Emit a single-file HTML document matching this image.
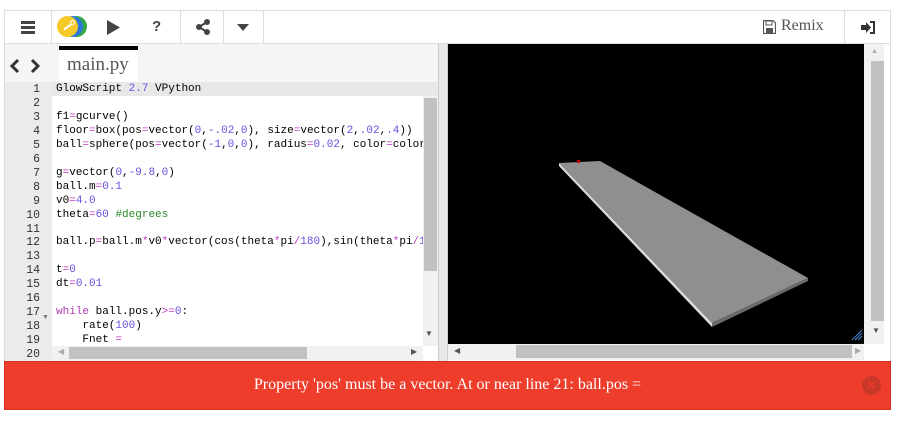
<!DOCTYPE html>
<html><head><style>
*{margin:0;padding:0;box-sizing:border-box}
body{width:909px;height:431px;background:#fff;position:relative;overflow:hidden;font-family:"Liberation Serif",serif}
.a{position:absolute}
.code{font-family:"Liberation Mono",monospace;font-size:11px;color:#000;white-space:pre;line-height:13.95px}
.n{color:#6a4ee0}.o{color:#c03ac0}.k{color:#b03ab0}.c{color:#2a8a2a}
.ln{font-family:"Liberation Mono",monospace;font-size:11.5px;color:#333;line-height:13.95px;text-align:right;width:36px}
</style></head><body>
<div class="a" style="left:4px;top:10px;width:887px;height:34px;border:1px solid #ddd"></div>
<div class="a" style="left:51px;top:11px;width:1px;height:32px;background:#ddd"></div>
<div class="a" style="left:180px;top:11px;width:1px;height:32px;background:#ddd"></div>
<div class="a" style="left:223px;top:11px;width:1px;height:32px;background:#ddd"></div>
<div class="a" style="left:263px;top:11px;width:1px;height:32px;background:#ddd"></div>
<div class="a" style="left:844px;top:11px;width:1px;height:32px;background:#ddd"></div>
<div class="a" style="left:21px;top:21px;width:14px;height:3px;background:#444"></div>
<div class="a" style="left:21px;top:26px;width:14px;height:3px;background:#444"></div>
<div class="a" style="left:21px;top:31px;width:14px;height:3px;background:#444"></div>
<div class="a" style="left:66px;top:16px;width:21px;height:21px;border-radius:50%;background:#35a845"></div>
<div class="a" style="left:62px;top:16px;width:21px;height:21px;border-radius:50%;background:#2a78d8"></div>
<div class="a" style="left:57px;top:16px;width:21px;height:21px;border-radius:50%;background:#f5c928"></div>
<div class="a" style="left:63px;top:26px;width:9px;height:2px;background:#fff;transform:rotate(-35deg)"></div>
<div class="a" style="left:70px;top:20px;width:5px;height:5px;border:1.5px solid #fff;border-radius:50%"></div>
<svg class="a" style="left:107px;top:20px" width="14" height="15"><path d="M0 0L13 7.5L0 15Z" fill="#444"/></svg>
<div class="a" style="left:152px;top:18px;font:bold 15px 'Liberation Sans',sans-serif;color:#444">?</div>
<svg class="a" style="left:195px;top:19px" width="16" height="16"><circle cx="12" cy="3" r="3" fill="#444"/><circle cx="4" cy="8" r="3" fill="#444"/><circle cx="12" cy="13" r="3" fill="#444"/><path d="M12 3L4 8L12 13" stroke="#444" stroke-width="2" fill="none"/></svg>
<svg class="a" style="left:237px;top:24px" width="12" height="7"><path d="M0 0H12L6 7Z" fill="#444"/></svg>
<svg class="a" style="left:763px;top:20px" width="13" height="14"><path d="M0.5 0.5H10L12.5 3V13.5H0.5Z" fill="none" stroke="#555" stroke-width="1.2"/><rect x="3" y="1" width="6" height="4" fill="none" stroke="#555"/><rect x="3" y="8" width="7" height="5" fill="#555"/></svg>
<div class="a" style="left:781px;top:17px;font-size:16px;color:#555">Remix</div>
<svg class="a" style="left:861px;top:21px" width="15" height="13"><path d="M0 4H5V1L10 6.5L5 12V9H0Z" fill="#333"/><path d="M9 1H13V12H9" fill="none" stroke="#333" stroke-width="2"/></svg>
<div class="a" style="left:4px;top:44px;width:436px;height:38px;background:#f5f5f5;border-left:1px solid #ddd"></div>
<svg class="a" style="left:10px;top:58px" width="30" height="16"><path d="M8 2L2 8L8 14M22 2L28 8L22 14" fill="none" stroke="#333" stroke-width="3"/></svg>
<div class="a" style="left:59px;top:46px;width:79px;height:36px;background:#fff;border-top:4px solid #000"></div>
<div class="a" style="left:67px;top:54px;font-size:19px;color:#555">main.py</div>
<div class="a" style="left:4px;top:82px;width:48px;height:279px;background:#ebebeb;border-left:1px solid #ddd"></div>
<div class="a" style="left:52px;top:82px;width:386px;height:14px;background:#e8e8e8"></div>
<div class="a ln" style="left:4px;top:83px">1<br>2<br>3<br>4<br>5<br>6<br>7<br>8<br>9<br>10<br>11<br>12<br>13<br>14<br>15<br>16<br>17<br>18<br>19<br>20</div>
<div class="a" style="left:42px;top:313px;font-size:7px;color:#777">▼</div>
<div class="a code" style="left:56px;top:83px;width:367px;height:263px;overflow:hidden">GlowScript <span class="n">2.7</span> VPython

f1<span class="o">=</span>gcurve()
floor<span class="o">=</span>box(pos<span class="o">=</span>vector(<span class="n">0</span>,<span class="n">-.02</span>,<span class="n">0</span>), size<span class="o">=</span>vector(<span class="n">2</span>,<span class="n">.02</span>,<span class="n">.4</span>))
ball<span class="o">=</span>sphere(pos<span class="o">=</span>vector(<span class="n">-1</span>,<span class="n">0</span>,<span class="n">0</span>), radius<span class="o">=</span><span class="n">0.02</span>, color<span class="o">=</span>color.red)

g<span class="o">=</span>vector(<span class="n">0</span>,<span class="n">-9.8</span>,<span class="n">0</span>)
ball.m<span class="o">=</span><span class="n">0.1</span>
v0<span class="o">=</span><span class="n">4.0</span>
theta<span class="o">=</span><span class="n">60</span> <span class="c">#degrees</span>

ball.p<span class="o">=</span>ball.m<span class="o">*</span>v0<span class="o">*</span>vector(cos(theta<span class="o">*</span>pi<span class="o">/</span><span class="n">180</span>),sin(theta<span class="o">*</span>pi<span class="o">/</span><span class="n">180</span>),0)

t<span class="o">=</span><span class="n">0</span>
dt<span class="o">=</span><span class="n">0.01</span>

<span class="k">while</span> ball.pos.y<span class="o">&gt;=</span><span class="n">0</span>:
    rate(<span class="n">100</span>)
    Fnet <span class="o">=</span></div>
<div class="a" style="left:423px;top:96px;width:15px;height:250px;background:#f1f1f1"></div>
<div class="a" style="left:424px;top:98px;width:13px;height:173px;background:#c1c1c1"></div>
<div class="a" style="left:425px;top:329px;font-size:8px;color:#555">▼</div>
<div class="a" style="left:52px;top:346px;width:371px;height:15px;background:#f1f1f1"></div>
<div class="a" style="left:69px;top:347px;width:238px;height:12px;background:#c1c1c1"></div>
<div class="a" style="left:58px;top:347px;font-size:8px;color:#aaa">◀</div>
<div class="a" style="left:411px;top:347px;font-size:8px;color:#555">▶</div>
<div class="a" style="left:438px;top:44px;width:10px;height:317px;background:#e8e8e8;border-left:1px solid #ccc;border-right:1px solid #ccc"></div>
<div class="a" style="left:448px;top:44px;width:416px;height:300px;background:#000"></div>
<svg class="a" style="left:448px;top:44px" width="416" height="300">
<path d="M111 119L152 117L360 234L264 279Z" fill="#8f8f8f"/>
<path d="M111 119L264 279L264 283L111 122Z" fill="#dcdcdc"/>
<path d="M264 279L360 234L360 237L264 283Z" fill="#6a6a6a"/>
<rect x="129" y="116" width="3" height="3" fill="#c00"/>
<path d="M404 296L414 286M407 296L414 289M410 296L414 292" stroke="#4a8ad8" stroke-width="1"/>
</svg>
<div class="a" style="left:864px;top:44px;width:20px;height:300px;background:#f1f1f1"></div>
<div class="a" style="left:871px;top:47px;font-size:7px;color:#aaa">▲</div>
<div class="a" style="left:871px;top:61px;width:13px;height:260px;background:#c1c1c1"></div>
<div class="a" style="left:872px;top:326px;font-size:8px;color:#555">▼</div>
<div class="a" style="left:448px;top:344px;width:416px;height:16px;background:#f1f1f1"></div>
<div class="a" style="left:516px;top:345px;width:336px;height:13px;background:#c1c1c1"></div>
<div class="a" style="left:454px;top:346px;font-size:8px;color:#555">◀</div>
<div class="a" style="left:855px;top:346px;font-size:8px;color:#aaa">▶</div>
<div class="a" style="left:884px;top:44px;width:7px;height:317px;background:#fff;border-right:1px solid #ddd"></div>
<div class="a" style="left:4px;top:361px;width:887px;height:49px;background:#ee3e2b;border:1px solid #d83020"></div>
<div class="a" style="left:4px;top:376px;width:887px;text-align:center;font-size:16px;color:#fff">Property 'pos' must be a vector. At or near line 21: ball.pos =</div>
<div class="a" style="left:862px;top:376px;width:19px;height:19px;border-radius:50%;background:#c8372a;color:#ee3e2b;font:bold 15px/19px 'Liberation Sans',sans-serif;text-align:center">×</div>
</body></html>
